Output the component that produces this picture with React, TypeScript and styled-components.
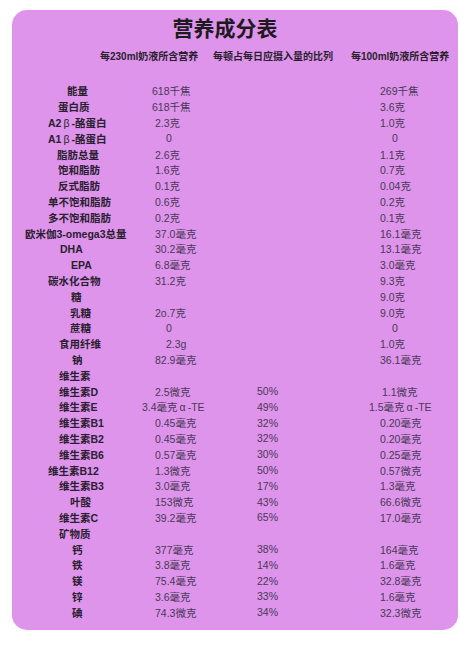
import React from "react";
import styled, { createGlobalStyle } from "styled-components";

const GlobalStyle = createGlobalStyle`
  html, body {
    margin: 0;
    padding: 0;
    background: #ffffff;
  }
  body {
    font-family: "Liberation Sans", "Noto Sans CJK SC", sans-serif;
  }
`;

const Page = styled.div`
  width: 474px;
  height: 649px;
  padding: 10px 16px 0 12px;
  box-sizing: border-box;
`;
const Card = styled.div`
  width: 446px;
  height: 620px;
  box-sizing: border-box;
  padding: 6px 0 10px 0;
  background: #dd94ea;
  border-radius: 15px;
  display: flex;
  flex-direction: column;
`;
const Title = styled.h1`
  margin: 0;
  padding-right: 20px;
  text-align: center;
  font-size: 21px;
  line-height: 26px;
  font-weight: 700;
  color: #1f1a22;
  font-family: "Liberation Sans", "Noto Sans CJK SC", sans-serif;
`;
const HeaderRow = styled.div`
  display: flex;
  margin-top: 6px;
  padding-left: 88px;
  height: 14px;
  align-items: center;
`;
const HeaderCell = styled.div<{ $w?: number }>`
  flex: ${(p) => (p.$w ? `0 0 ${p.$w}px` : "1")};
  font-size: 10px;
  font-weight: 700;
  color: #2a1f2f;
  white-space: nowrap;
`;
const Table = styled.div`
  margin-top: 21px;
  display: flex;
  flex-direction: column;
`;
const Row = styled.div`
  display: grid;
  grid-template-columns: 128px 110px 110px 1fr;
  height: 15.8px;
  align-items: center;
`;
const Label = styled.div<{ $indent: number }>`
  padding-left: ${(p) => p.$indent}px;
  font-size: 10.5px;
  font-weight: 700;
  color: #2a2030;
  white-space: nowrap;
`;
const Greek = styled.span`
  font-weight: 400;
  margin: 0 2px;
`;
const Value = styled.div<{ $indent: number }>`
  padding-left: ${(p) => p.$indent}px;
  font-size: 10.5px;
  color: #4a3858;
  white-space: nowrap;
`;

type Item = {
  label: React.ReactNode;
  li: number;
  v1?: React.ReactNode;
  i1?: number;
  pct?: string;
  v3?: React.ReactNode;
  i3?: number;
};

const beta = (prefix: string) => (
  <>
    {prefix}
    <Greek>β</Greek>-酪蛋白
  </>
);
const alpha = (prefix: string) => (
  <>
    {prefix}
    <Greek>α</Greek>-TE
  </>
);

const rows: Item[] = [
  { label: "能量", li: 55, v1: "618千焦", i1: 12, v3: "269千焦" },
  { label: "蛋白质", li: 46, v1: "618千焦", i1: 12, v3: "3.6克" },
  { label: beta("A2"), li: 36, v1: "2.3克", v3: "1.0克" },
  { label: beta("A1"), li: 36, v1: "0", i1: 26, v3: "0", i3: 32 },
  { label: "脂肪总量", li: 45, v1: "2.6克", v3: "1.1克" },
  { label: "饱和脂肪", li: 46, v1: "1.6克", v3: "0.7克" },
  { label: "反式脂肪", li: 46, v1: "0.1克", v3: "0.04克" },
  { label: "单不饱和脂肪", li: 36, v1: "0.6克", v3: "0.2克" },
  { label: "多不饱和脂肪", li: 36, v1: "0.2克", v3: "0.1克" },
  { label: "欧米伽3-omega3总量", li: 13, v1: "37.0毫克", v3: "16.1毫克" },
  { label: "DHA", li: 48, v1: "30.2毫克", v3: "13.1毫克" },
  { label: "EPA", li: 59, v1: "6.8毫克", v3: "3.0毫克" },
  { label: "碳水化合物", li: 36, v1: "31.2克", v3: "9.3克" },
  { label: "糖", li: 59, v3: "9.0克" },
  { label: "乳糖", li: 58, v1: "2o.7克", v3: "9.0克" },
  { label: "蔗糖", li: 58, v1: "0", i1: 26, v3: "0", i3: 32 },
  { label: "食用纤维", li: 47, v1: "2.3g", i1: 26, v3: "1.0克" },
  { label: "钠", li: 60, v1: "82.9毫克", v3: "36.1毫克" },
  { label: "维生素", li: 47 },
  { label: "维生素D", li: 47, v1: "2.5微克", pct: "50%", v3: "1.1微克", i3: 22 },
  { label: "维生素E", li: 47, v1: alpha("3.4毫克"), i1: 2, pct: "49%", v3: alpha("1.5毫克"), i3: 9 },
  { label: "维生素B1", li: 47, v1: "0.45毫克", pct: "32%", v3: "0.20毫克" },
  { label: "维生素B2", li: 47, v1: "0.45毫克", pct: "32%", v3: "0.20毫克" },
  { label: "维生素B6", li: 47, v1: "0.57毫克", pct: "30%", v3: "0.25毫克" },
  { label: "维生素B12", li: 36, v1: "1.3微克", pct: "50%", v3: "0.57微克" },
  { label: "维生素B3", li: 47, v1: "3.0毫克", pct: "17%", v3: "1.3毫克" },
  { label: "叶酸", li: 58, v1: "153微克", pct: "43%", v3: "66.6微克" },
  { label: "维生素C", li: 47, v1: "39.2毫克", pct: "65%", v3: "17.0毫克" },
  { label: "矿物质", li: 47 },
  { label: "钙", li: 60, v1: "377毫克", pct: "38%", v3: "164毫克" },
  { label: "铁", li: 60, v1: "3.8毫克", pct: "14%", v3: "1.6毫克" },
  { label: "镁", li: 60, v1: "75.4毫克", pct: "22%", v3: "32.8毫克" },
  { label: "锌", li: 60, v1: "3.6毫克", pct: "33%", v3: "1.6毫克" },
  { label: "碘", li: 60, v1: "74.3微克", pct: "34%", v3: "32.3微克" },
];

export default function App() {
  return (
    <Page>
      <GlobalStyle />
      <Card>
        <Title>营养成分表</Title>
        <HeaderRow>
          <HeaderCell $w={113}>每230ml奶液所含营养</HeaderCell>
          <HeaderCell $w={138}>每顿占每日应摄入量的比列</HeaderCell>
          <HeaderCell>每100ml奶液所含营养</HeaderCell>
        </HeaderRow>
        <Table>
          {rows.map((r, i) => (
            <Row key={i}>
              <Label $indent={r.li}>{r.label}</Label>
              <Value $indent={r.i1 ?? 15}>{r.v1 ?? ""}</Value>
              <Value $indent={7}>{r.pct ?? ""}</Value>
              <Value $indent={r.i3 ?? 20}>{r.v3 ?? ""}</Value>
            </Row>
          ))}
        </Table>
      </Card>
    </Page>
  );
}
